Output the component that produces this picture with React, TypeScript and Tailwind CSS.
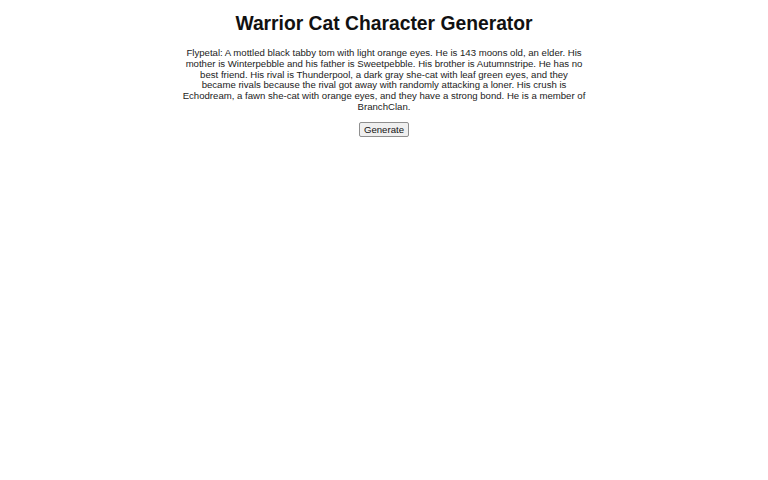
export default function App() {
  return (
    <div className="min-h-[480px] bg-white text-black flex flex-col items-center" style={{ fontFamily: '"Liberation Sans", Arial, sans-serif' }}>
      <h1 className="mt-[12px] text-[19.3px] leading-[23px] font-bold text-[#111]">Warrior Cat Character Generator</h1>
      <p className="mt-[13px] w-[404px] text-center text-[9.6px] leading-[10.8px] text-[#222]">
        Flypetal: A mottled black tabby tom with light orange eyes. He is 143 moons old, an elder. His mother is Winterpebble and his father is Sweetpebble. His brother is Autumnstripe. He has no best friend. His rival is Thunderpool, a dark gray she-cat with leaf green eyes, and they became rivals because the rival got away with randomly attacking a loner. His crush is Echodream, a fawn she-cat with orange eyes, and they have a strong bond. He is a member of BranchClan.
      </p>
      <button className="mt-[9px] px-[4px] h-[15px] text-[9.6px] leading-[13px] border border-[#8f8f8f] rounded-[2px] bg-[#efefef] text-[#111]">Generate</button>
    </div>
  );
}
